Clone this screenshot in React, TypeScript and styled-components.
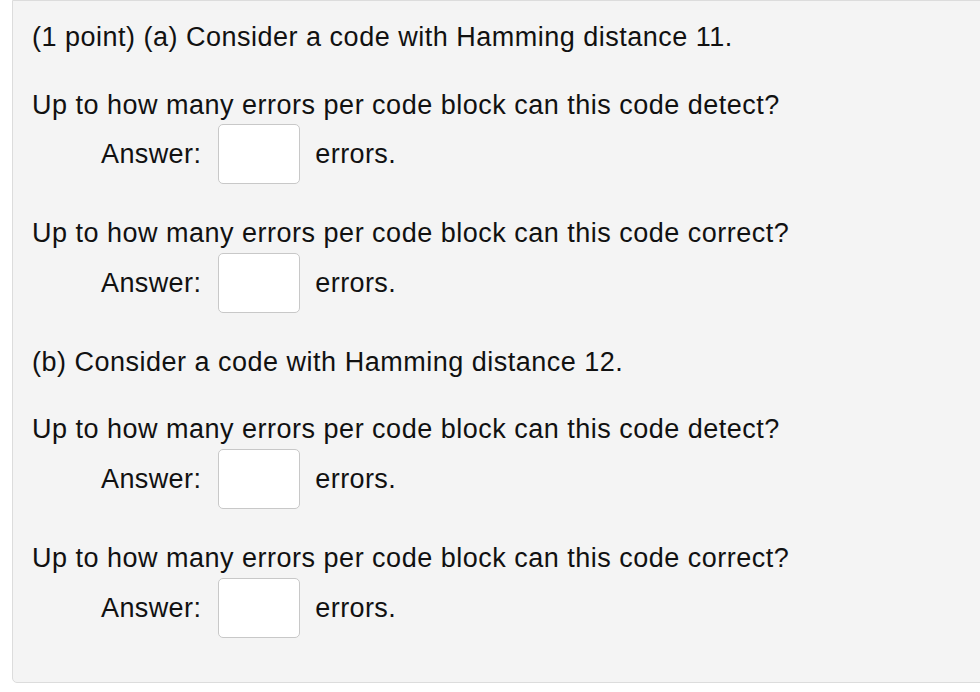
import React from 'react'
import styled, { createGlobalStyle } from 'styled-components'

const Global = createGlobalStyle`
  html, body {
    margin: 0;
    padding: 0;
    background: #fff;
    overflow: hidden;
  }
  body {
    font-family: 'Liberation Sans', Arial, Helvetica, sans-serif;
    color: #111;
  }
`

const Panel = styled.div`
  margin-left: 12px;
  width: 1000px;
  height: 683px;
  box-sizing: border-box;
  background: #f4f4f4;
  border: 1px solid #dcdcdc;
  border-radius: 0 0 0 5px;
  padding: 21px 0 0 19px;
`

const Text = styled.p<{ gap: number }>`
  margin: 0 0 ${(p) => p.gap}px 0;
  font-size: 27px;
  letter-spacing: 0.5px;
  line-height: 30px;
`

const AnswerRow = styled.div`
  display: flex;
  align-items: center;
  padding-left: 69px;
  margin-bottom: 34px;
  font-size: 27px;
  letter-spacing: 0.4px;
  line-height: 30px;
`

const Label = styled.span`
  margin-right: 17px;
`

const Box = styled.input`
  width: 82px;
  height: 60px;
  box-sizing: border-box;
  border: 1.5px solid #c8c8c8;
  border-radius: 5px;
  background: #fff;
  margin-right: 15px;
  padding: 0;
  outline: none;
`

const Answer = () => (
  <AnswerRow>
    <Label>Answer:</Label>
    <Box type="text" />
    <span>errors.</span>
  </AnswerRow>
)

export default function App() {
  return (
    <>
      <Global />
      <Panel>
        <Text gap={38}>(1 point) (a) Consider a code with Hamming distance 11.</Text>
        <Text gap={4}>Up to how many errors per code block can this code detect?</Text>
        <Answer />
        <Text gap={5}>Up to how many errors per code block can this code correct?</Text>
        <Answer />
        <Text gap={37}>(b) Consider a code with Hamming distance 12.</Text>
        <Text gap={5}>Up to how many errors per code block can this code detect?</Text>
        <Answer />
        <Text gap={5}>Up to how many errors per code block can this code correct?</Text>
        <Answer />
      </Panel>
    </>
  )
}
